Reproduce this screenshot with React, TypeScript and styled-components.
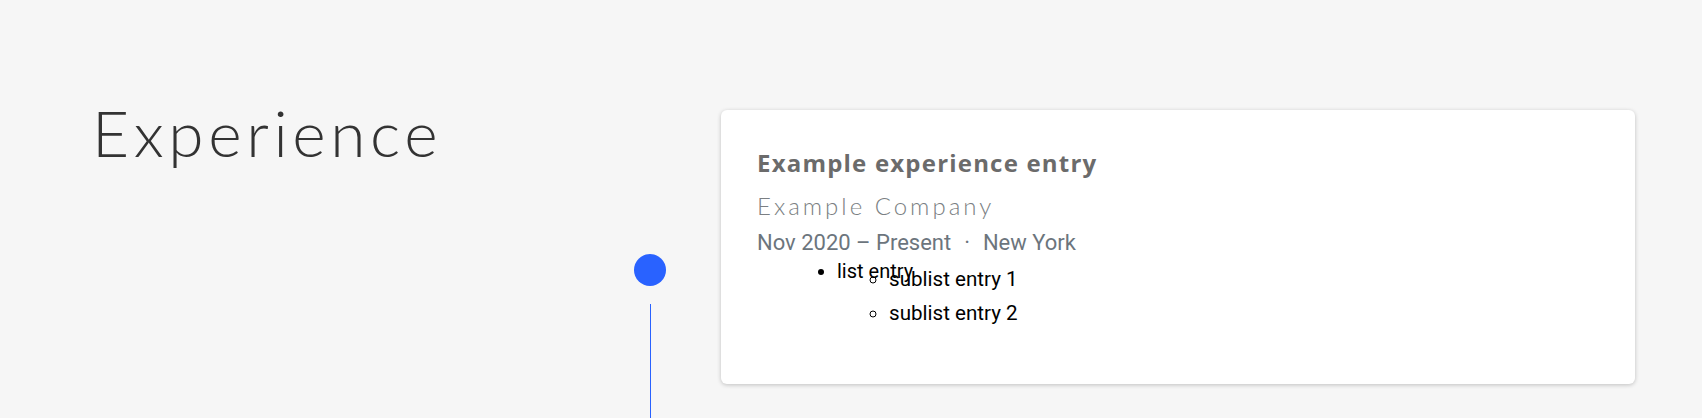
import styled, { createGlobalStyle } from "styled-components";

const GlobalStyle = createGlobalStyle`
  html, body {
    margin: 0;
    padding: 0;
    background: #f6f6f6;
  }
  body {
    font-family: Roboto, "Liberation Sans", sans-serif;
    overflow: hidden;
  }
`;

const accent = "#2962ff";

const Section = styled.section`
  display: flex;
  align-items: stretch;
  height: 100vh;
  box-sizing: border-box;
  padding: 91px 67px 0 92px;
`;

const Heading = styled.h2`
  flex: 0 0 542px;
  margin: 4px 0 0;
  font-family: Lato, "Open Sans", sans-serif;
  font-weight: 300;
  font-size: 64px;
  line-height: 1.2;
  letter-spacing: 4.6px;
  color: #333333;
`;

const Timeline = styled.div`
  flex: 0 0 32px;
  display: flex;
  flex-direction: column;
  align-items: center;
  margin-right: 55px;
`;

const Dot = styled.div`
  width: 32px;
  height: 32px;
  border-radius: 50%;
  background: ${accent};
  margin-top: 163px;
`;

const Line = styled.div`
  flex: 1;
  width: 1px;
  background: ${accent};
  margin-top: 18px;
`;

const Card = styled.article`
  flex: 1;
  align-self: flex-start;
  margin-top: 19px;
  background: #ffffff;
  border-radius: 6px;
  box-shadow: 0 1px 4px rgba(0, 0, 0, 0.22);
  padding: 38px 34px 36px 36px;
`;

const Title = styled.h3`
  margin: 0;
  font-family: "Open Sans", Lato, sans-serif;
  font-weight: 700;
  font-size: 24px;
  line-height: 29px;
  letter-spacing: 1.2px;
  color: #6b6b6b;
`;

const Company = styled.div`
  margin-top: 15px;
  font-family: Lato, "Open Sans", sans-serif;
  font-weight: 300;
  font-size: 24px;
  line-height: 1.2;
  letter-spacing: 3px;
  color: #7b7f83;
`;

const Meta = styled.div`
  margin-top: 9px;
  font-size: 22px;
  color: #6c757d;
`;

const Sep = styled.span`
  margin: 0 13px;
`;

const List = styled.ul`
  margin: 4px 0 23px;
  padding-left: 80px;
  font-size: 20px;
  color: #000000;
  list-style: disc;
`;

const SubList = styled.ul`
  margin: -16px 0 0;
  padding-left: 52px;
  list-style: circle;
`;

const SubItem = styled.li`
  margin-bottom: 10px;
  font-size: 20.6px;
`;

const App = () => {
  return (
    <>
      <GlobalStyle />
      <Section>
        <Heading>Experience</Heading>
        <Timeline>
          <Dot />
          <Line />
        </Timeline>
        <Card>
          <Title>Example experience entry</Title>
          <Company>Example Company</Company>
          <Meta>
            Nov 2020 – Present<Sep>·</Sep>New York
          </Meta>
          <List>
            <li>list entry</li>
            <SubList>
              <SubItem>sublist entry 1</SubItem>
              <SubItem>sublist entry 2</SubItem>
            </SubList>
          </List>
        </Card>
      </Section>
    </>
  );
};

export default App;
